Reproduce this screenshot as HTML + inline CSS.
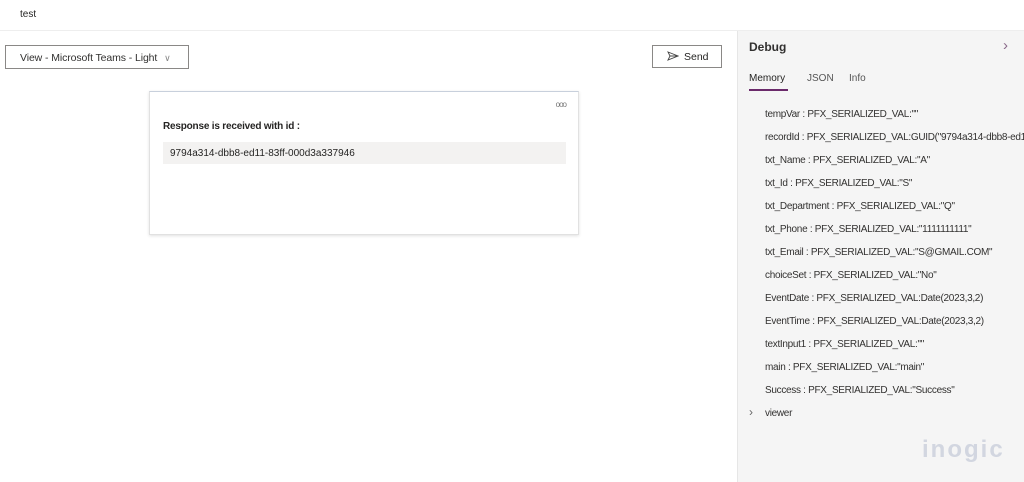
<!DOCTYPE html>
<html><head><style>
*{margin:0;padding:0;box-sizing:border-box}
body{width:1024px;height:482px;overflow:hidden;background:#fff;font-family:"Liberation Sans",sans-serif;color:#252423;position:relative}
.abs{position:absolute}
.top{left:0;top:0;width:1024px;height:31px;border-bottom:1px solid #eee;background:#fff}
.dbg{left:737px;top:31px;width:287px;height:451px;background:#f5f5f5;border-left:1px solid #e6e6e6;overflow:hidden}
.row{position:absolute;left:27px;font-size:10px;white-space:nowrap;color:#323130;letter-spacing:-0.3px}
</style></head><body>
<div class="abs top"><div class="abs" style="left:20px;top:9px;font-size:10px">test</div></div>
<div class="abs" style="left:5px;top:45px;width:184px;height:24px;border:1px solid #8a8886;font-size:10.5px;padding:6px 0 0 14px;color:#323130;letter-spacing:-0.1px">View - Microsoft Teams - Light <span style="color:#888;font-size:9px;margin-left:4px">&#x2228;</span></div>
<div class="abs" style="left:652px;top:45px;width:70px;height:23px;border:1px solid #8a8886;font-size:10.5px;padding:5px 0 0 14px">
<svg width="12" height="10" viewBox="0 0 12 10" style="vertical-align:-1px;margin-right:5px"><path d="M1 1L11 5L1 9L3 5Z M3 5H11" fill="none" stroke="#444" stroke-width="0.9"/></svg>Send</div>
<div class="abs" style="left:149px;top:91px;width:430px;height:144px;background:#fff;border:1px solid #e1e1e1;border-top:1px solid #c8d0dc;box-shadow:0 1px 3px rgba(0,0,0,.12)">
<div class="abs" style="right:12px;top:8px;font-size:8px;color:#777;letter-spacing:-1px">ooo</div>
<div class="abs" style="left:13px;top:29px;font-size:10px;font-weight:bold;letter-spacing:-0.2px">Response is received with id :</div>
<div class="abs" style="left:13px;top:50px;width:403px;height:22px;background:#f3f2f1;font-size:10px;padding:6px 0 0 7px">9794a314-dbb8-ed11-83ff-000d3a337946</div>
</div>
<div class="abs dbg">
<div class="abs" style="left:11px;top:9px;font-size:12px;font-weight:bold;color:#323130">Debug</div>
<div class="abs" style="left:265px;top:6px;font-size:15px;color:#8a6a8a">&#x203A;</div>
<div class="abs" style="left:11px;top:42px;font-size:10px">Memory</div>
<div class="abs" style="left:11px;top:58px;width:39px;height:2px;background:#6b2a6b"></div>
<div class="abs" style="left:69px;top:42px;font-size:10px;color:#555">JSON</div>
<div class="abs" style="left:111px;top:42px;font-size:10px;color:#555">Info</div>
<div class="row" style="top:78px">tempVar : PFX_SERIALIZED_VAL:""</div>
<div class="row" style="top:101px">recordId : PFX_SERIALIZED_VAL:GUID("9794a314-dbb8-ed11</div>
<div class="row" style="top:124px">txt_Name : PFX_SERIALIZED_VAL:"A"</div>
<div class="row" style="top:147px">txt_Id : PFX_SERIALIZED_VAL:"S"</div>
<div class="row" style="top:170px">txt_Department : PFX_SERIALIZED_VAL:"Q"</div>
<div class="row" style="top:193px">txt_Phone : PFX_SERIALIZED_VAL:"1111111111"</div>
<div class="row" style="top:216px">txt_Email : PFX_SERIALIZED_VAL:"S@GMAIL.COM"</div>
<div class="row" style="top:239px">choiceSet : PFX_SERIALIZED_VAL:"No"</div>
<div class="row" style="top:262px">EventDate : PFX_SERIALIZED_VAL:Date(2023,3,2)</div>
<div class="row" style="top:285px">EventTime : PFX_SERIALIZED_VAL:Date(2023,3,2)</div>
<div class="row" style="top:308px">textInput1 : PFX_SERIALIZED_VAL:""</div>
<div class="row" style="top:331px">main : PFX_SERIALIZED_VAL:"main"</div>
<div class="row" style="top:354px">Success : PFX_SERIALIZED_VAL:"Success"</div>
<div class="row" style="left:11px;top:374px;color:#666;font-size:12px">&#x203A;</div>
<div class="row" style="top:377px">viewer</div>
<div class="abs" style="left:184px;top:405px;font-size:24px;font-weight:bold;color:#d2d6e0;letter-spacing:2px">inogic</div>
</div>
</body></html>
